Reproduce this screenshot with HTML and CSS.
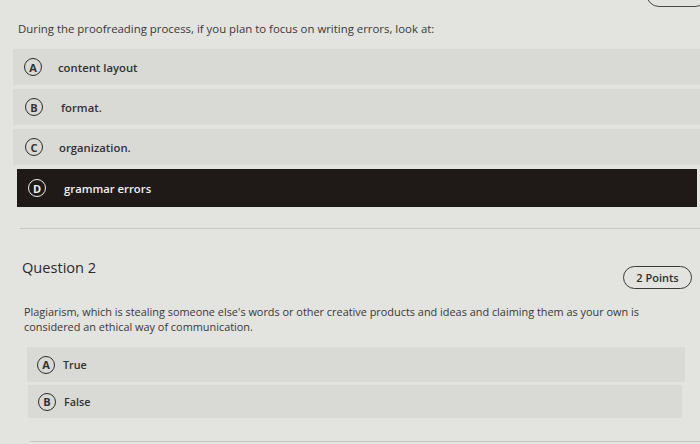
FILE: index.html
```html
<!DOCTYPE html>
<html>
<head>
<meta charset="utf-8">
<link rel="stylesheet" href="styles.css">
</head>
<body>
<div class="page">
  <div class="top"><div class="peek"></div></div>
  <p class="prompt">During the proofreading process, if you plan to focus on writing errors, look at:</p>
  <div class="options q1">
    <div class="opt a"><span class="badge">A</span><span class="label">content layout</span></div>
    <div class="opt b"><span class="badge">B</span><span class="label">format.</span></div>
    <div class="opt c"><span class="badge">C</span><span class="label">organization.</span></div>
    <div class="opt d selected"><span class="badge">D</span><span class="label">grammar errors</span></div>
  </div>
  <hr class="divider">
  <div class="qhead">
    <h2 class="qtitle">Question 2</h2>
    <span class="points">2 Points</span>
  </div>
  <p class="para">Plagiarism, which is stealing someone else's words or other creative products and ideas and claiming them as your own is considered an ethical way of communication.</p>
  <div class="options q2">
    <div class="opt t"><span class="badge">A</span><span class="label">True</span></div>
    <div class="opt f"><span class="badge">B</span><span class="label">False</span></div>
  </div>
  <hr class="divider bottom">
</div>
</body>
</html>
```
FILE: styles.css
```css
html, body {
  margin: 0;
  padding: 0;
}
body {
  width: 700px;
  height: 444px;
  overflow: hidden;
  background: #e3e3e0;
  font-family: "Open Sans", "DejaVu Sans", sans-serif;
  color: #3b3a39;
}
.page {
  display: flex;
  flex-direction: column;
}
.top {
  height: 6px;
  display: flex;
  justify-content: flex-end;
}
.peek {
  width: 60px;
  height: 24px;
  margin-top: -19px;
  margin-right: -8px;
  border: 1.5px solid #4a4846;
  border-radius: 13px;
}
.prompt {
  margin: 15px 0 0 18px;
  font-size: 11.4px;
  line-height: 15px;
  color: #3a3837;
}
.options {
  display: flex;
  flex-direction: column;
  gap: 4px;
}
.q1 {
  margin-top: 13px;
}
.opt {
  display: flex;
  align-items: center;
  background: #d9d9d6;
  font-weight: 600;
  font-size: 11.3px;
  color: #333231;
}
.q1 .opt {
  height: 36px;
  margin-left: 13px;
  padding-left: 11px;
}
.q1 .b, .q1 .c {
  padding-left: 12px;
}
.q1 .d {
  height: 38px;
  margin-left: 17px;
  margin-right: 3px;
  padding-left: 11px;
}
.badge {
  box-sizing: border-box;
  width: 18px;
  height: 18px;
  border: 1.5px solid #2d2c2b;
  border-radius: 50%;
  display: flex;
  align-items: center;
  justify-content: center;
  font-size: 11px;
  font-weight: 700;
  line-height: 1;
  flex: none;
}
.q1 .label {
  margin-left: 16px;
}
.q1 .b .label, .q1 .d .label {
  margin-left: 18px;
}
.selected {
  background: #1f1a18;
  color: #f2f0ee;
}
.selected .badge {
  border-color: #f2f0ee;
  color: #f2f0ee;
}
.divider {
  margin: 21px 0 0 20px;
  border: 0;
  border-top: 1px solid #c6c6c3;
  height: 0;
}
.qhead {
  display: flex;
  justify-content: space-between;
  align-items: flex-start;
  margin-top: 28px;
}
.qtitle {
  margin: 0 0 0 22px;
  font-size: 14.6px;
  font-weight: 500;
  line-height: 20px;
  color: #2c2b2a;
}
.points {
  margin-top: 9px;
  margin-right: 8px;
  box-sizing: border-box;
  height: 23px;
  width: 69px;
  border: 1.5px solid #3a3938;
  border-radius: 12px;
  display: flex;
  align-items: center;
  justify-content: center;
  font-size: 11px;
  font-weight: 600;
  color: #2f2e2d;
}
.para {
  margin: 15px 0 0 24px;
  width: 628px;
  font-size: 10.9px;
  line-height: 15px;
  color: #383736;
}
.q2 {
  margin-top: 13px;
  gap: 3px;
}
.q2 .opt {
  height: 35px;
  margin-left: 27px;
  margin-right: 15px;
  padding-left: 10px;
  font-size: 10.8px;
}
.q2 .f {
  height: 33px;
  margin-left: 28px;
  margin-right: 18px;
}
.q2 .label {
  margin-left: 8px;
}
.bottom {
  margin: 23px 0 0 30px;
}
```
